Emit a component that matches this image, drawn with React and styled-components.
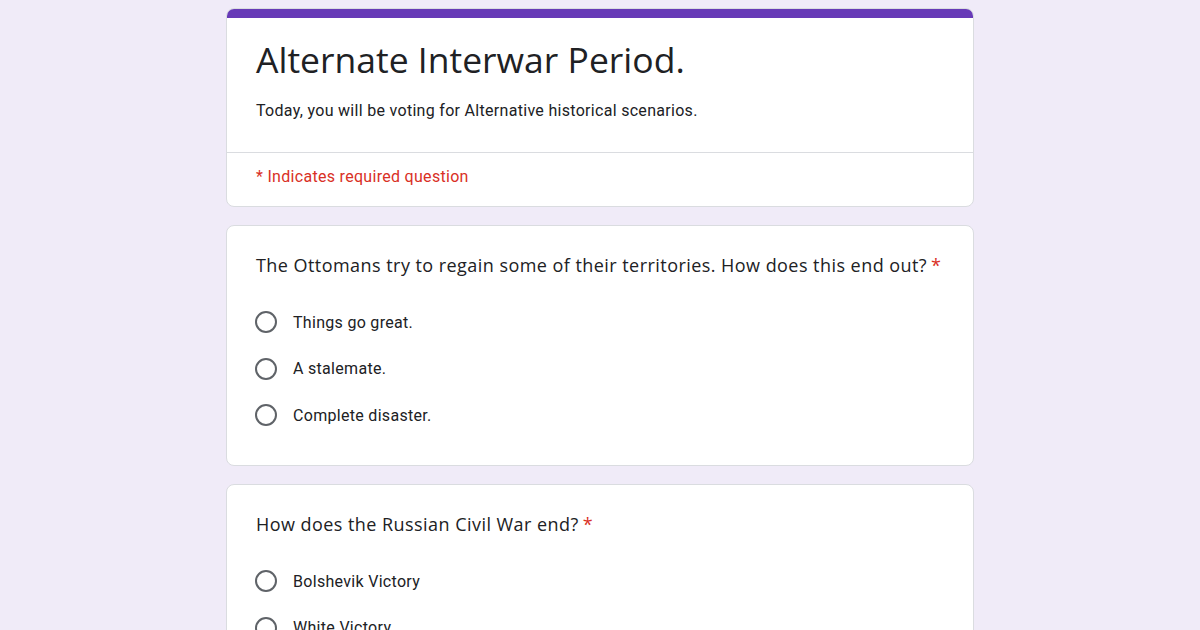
import React from 'react';
import styled, { createGlobalStyle } from "styled-components";

const GlobalStyle = createGlobalStyle`
  html, body {
    margin: 0;
    padding: 0;
    background-color: #f0ebf8;
  }
  body {
    font-family: Roboto, "Liberation Sans", Arial, sans-serif;
    color: #202124;
    height: 630px;
    overflow: hidden;
  }
`;

const Page = styled.div`
  display: flex;
  flex-direction: column;
  align-items: center;
  gap: 18px;
  padding-top: 8px;
`;

const Card = styled.div`
  box-sizing: border-box;
  width: 748px;
  background-color: #fff;
  border: 1px solid #dadce0;
  border-radius: 8px;
  overflow: hidden;
`;

const TopBar = styled.div`
  height: 10px;
  background-color: #673ab7;
  margin: -1px -1px 0;
`;

const HeaderMain = styled.div`
  padding: 21px 29px 29px;
  border-bottom: 1px solid #dadce0;
`;

const Title = styled.h1`
  margin: 0;
  font-family: "Open Sans", sans-serif;
  font-weight: 400;
  font-size: 35.5px;
  line-height: 40px;
`;

const Description = styled.div`
  margin-top: 20px;
  font-size: 16px;
  line-height: 24px;
  letter-spacing: 0.3px;
`;

const Required = styled.div`
  padding: 12px 29px 17px;
  font-size: 16px;
  line-height: 24px;
  letter-spacing: 0.3px;
  color: #d93025;
`;

const QuestionBody = styled.div`
  padding: 26px 29px 38px;
`;

const QuestionTitle = styled.div`
  font-family: "Open Sans", sans-serif;
  font-size: 18px;
  line-height: 27px;
  letter-spacing: 0.45px;
`;

const Star = styled.span`
  color: #d93025;
  margin-left: 4px;
`;

const Options = styled.div`
  display: flex;
  flex-direction: column;
  gap: 22.5px;
  margin-top: 31px;
`;

const Option = styled.label`
  display: flex;
  align-items: center;
  gap: 16px;
  height: 24px;
  font-size: 16px;
  letter-spacing: 0.3px;
`;

const Radio = styled.span`
  box-sizing: border-box;
  width: 22px;
  height: 22px;
  margin-left: -1px;
  border: 2px solid #5f6368;
  border-radius: 50%;
  flex-shrink: 0;
`;

const questions = [
  {
    title: "The Ottomans try to regain some of their territories. How does this end out?",
    options: ["Things go great.", "A stalemate.", "Complete disaster."],
  },
  {
    title: "How does the Russian Civil War end?",
    options: ["Bolshevik Victory", "White Victory", "Stalemate"],
  },
];

const App = () => {
  return (
    <>
      <GlobalStyle />
      <Page>
        <Card>
          <TopBar />
          <HeaderMain>
            <Title>Alternate Interwar Period.</Title>
            <Description>Today, you will be voting for Alternative historical scenarios.</Description>
          </HeaderMain>
          <Required>* Indicates required question</Required>
        </Card>
        {questions.map((q) => (
          <Card key={q.title}>
            <QuestionBody>
              <QuestionTitle>
                {q.title}
                <Star>*</Star>
              </QuestionTitle>
              <Options>
                {q.options.map((o) => (
                  <Option key={o}>
                    <Radio />
                    {o}
                  </Option>
                ))}
              </Options>
            </QuestionBody>
          </Card>
        ))}
      </Page>
    </>
  );
};

export default App;
